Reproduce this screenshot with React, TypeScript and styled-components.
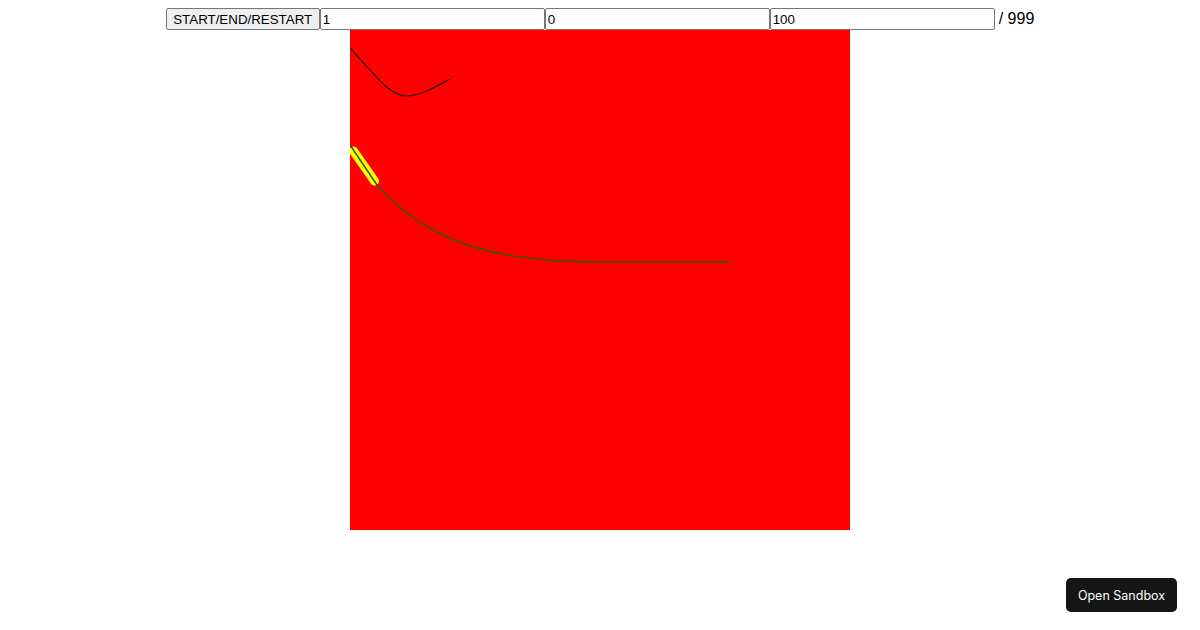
import React, { useState } from 'react';
import styled, { createGlobalStyle } from 'styled-components';

const GlobalStyle = createGlobalStyle`
  body {
    margin: 8px;
    background: #ffffff;
    font-family: "Liberation Sans", Arial, sans-serif;
  }
`;

const Toolbar = styled.div`
  display: flex;
  justify-content: center;
  align-items: center;
  height: 22px;
  font-size: 16px;
  color: #000;
`;

const Button = styled.button`
  box-sizing: border-box;
  width: 154px;
  height: 22px;
  padding: 1px 6px;
  font-family: "Liberation Sans", Arial, sans-serif;
  font-size: 13.333px;
  color: #000;
  background: #efefef;
  border: 1px solid #767676;
  border-radius: 2px;
`;

const Field = styled.input`
  box-sizing: border-box;
  width: 225px;
  height: 22px;
  padding: 1px 2px;
  font-family: "Liberation Sans", Arial, sans-serif;
  font-size: 13.333px;
  color: #000;
  border: 1px solid #767676;
  border-radius: 2px;
  margin: 0;
`;

const Total = styled.span`
  margin-left: 4px;
  white-space: pre;
`;

const Stage = styled.svg`
  display: block;
  margin: 0 auto;
`;

const SandboxButton = styled.button`
  position: fixed;
  right: 23px;
  bottom: 18px;
  width: 111px;
  height: 34px;
  border: none;
  border-radius: 5px;
  background: #151515;
  color: #fff;
  font-family: Inter, "Liberation Sans", sans-serif;
  font-size: 12.5px;
`;

const App: React.FC = () => {
  const [frame, setFrame] = useState('1');
  const [start, setStart] = useState('0');
  const [speed, setSpeed] = useState('100');

  return (
    <>
      <GlobalStyle />
      <Toolbar>
        <Button>START/END/RESTART</Button>
        <Field value={frame} onChange={(e) => setFrame(e.target.value)} />
        <Field value={start} onChange={(e) => setStart(e.target.value)} />
        <Field value={speed} onChange={(e) => setSpeed(e.target.value)} />
        <Total>/ 999</Total>
      </Toolbar>
      <Stage width={500} height={500} viewBox='0 0 500 500'>
        <rect width={500} height={500} fill='#ff0000' />
        <path
          d='M0 18 C 25 45, 40 66, 56 66 C 70 66, 85 57, 100 49'
          fill='none'
          stroke='#3a1500'
          strokeWidth={1.3}
        />
        <path
          d='M3.5 121 L 24.5 151'
          fill='none'
          stroke='#ffff00'
          strokeWidth={9}
          strokeLinecap='round'
        />
        <path
          d='M0 115 L 27 155 C 80 215, 150 232, 250 232 L 380 232'
          fill='none'
          stroke='#2f5a00'
          strokeWidth={1.5}
        />
      </Stage>
      <SandboxButton>Open Sandbox</SandboxButton>
    </>
  );
};

export default App;
